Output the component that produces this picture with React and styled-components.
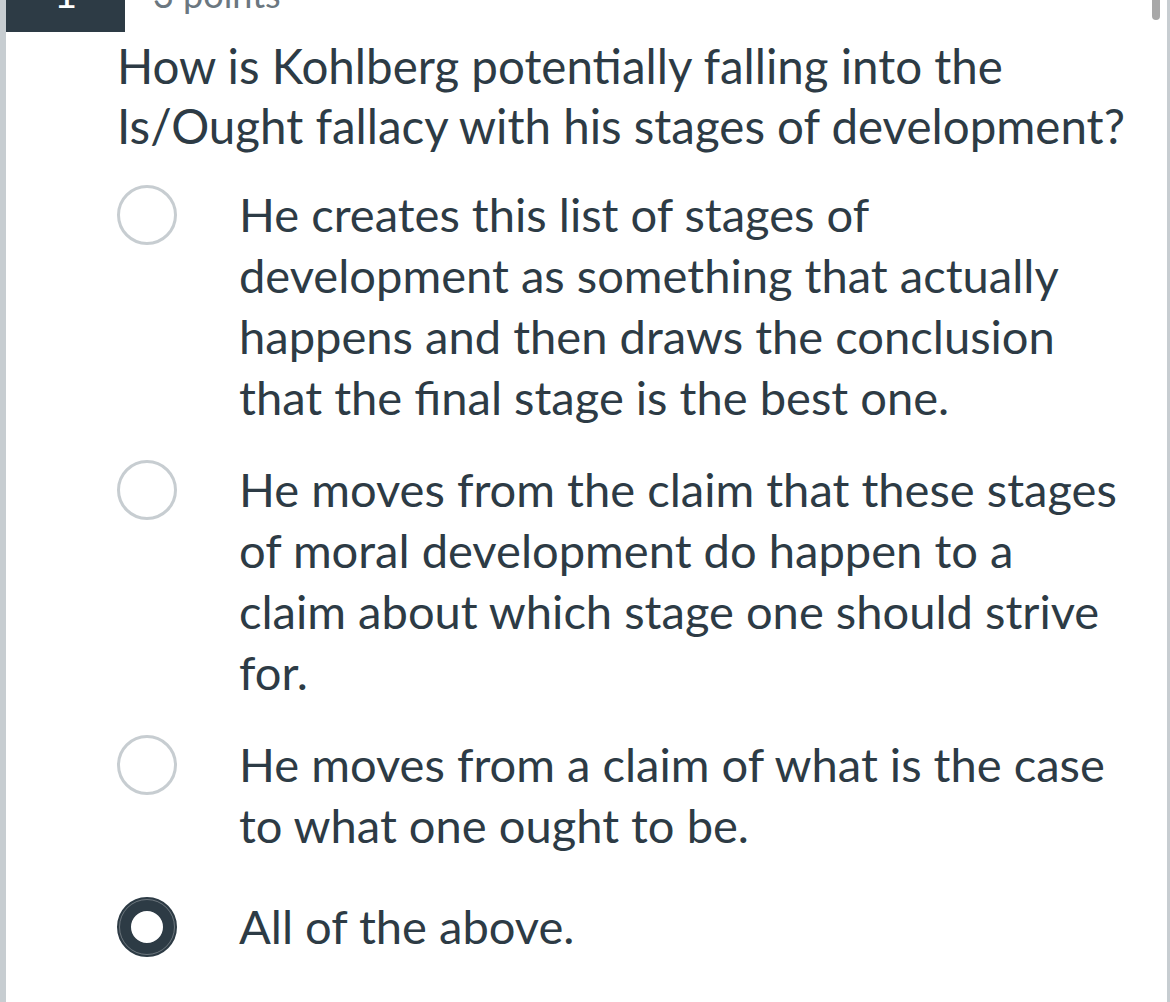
import React from "react";
import styled, { createGlobalStyle } from "styled-components";

const GlobalStyle = createGlobalStyle`
  html, body {
    margin: 0;
    padding: 0;
    background: #fff;
    overflow: hidden;
  }
  body {
    font-family: Lato, "Open Sans", "Liberation Sans", sans-serif;
    color: #2d3b45;
  }
`;

const Page = styled.div`
  box-sizing: border-box;
  min-height: calc(100vh + 30px);
  margin-top: -30px;
  border-left: 6px solid #c7cdd1;
  border-right: 3px solid #c7cdd1;
  padding: 0 37px 0 0;
`;

// header is scrolled mostly out of view
const Header = styled.div`
  display: flex;
  align-items: flex-start;
  height: 62px;
`;

const Tab = styled.div`
  width: 119px;
  height: 62px;
  background: #2d3b45;
  color: #fff;
  font-size: 40px;
  line-height: 40px;
  text-align: center;
  overflow: hidden;
  & span {
    display: block;
    margin-top: 3px;
  }
`;

const Points = styled.div`
  margin-left: 28px;
  margin-top: 6px;
  font-size: 36px;
  line-height: 36px;
  color: #6b7780;
`;

const Body = styled.div`
  padding-left: 111px;
`;

const Question = styled.h1`
  margin: 4px 0 0;
  font-size: 47.5px;
  font-weight: 400;
  line-height: 60px;
`;

const Options = styled.div`
  display: flex;
  flex-direction: column;
  gap: 31px;
  margin-top: 28px;
`;

const Option = styled.label`
  display: flex;
  align-items: flex-start;
  gap: 62px;
  margin-top: ${(p) => (p.$extra ? `${p.$extra}px` : "0")};
`;

const Radio = styled.span`
  box-sizing: border-box;
  flex: 0 0 60px;
  width: 60px;
  height: 60px;
  margin-top: 1px;
  border-radius: 50%;
  background: #fff;
  position: relative;
  border: ${(p) => (p.$checked ? "14.5px solid #2d3b45" : "3px solid #c7cdd1")};
  &::after {
    content: "";
    display: ${(p) => (p.$checked ? "block" : "none")};
    position: absolute;
    inset: -12px;
    border-radius: 50%;
    border: 1px solid rgba(255, 255, 255, 0.3);
  }
`;

const OptionText = styled.div`
  font-size: 47.1px;
  line-height: 61px;
`;

const Scrollbar = styled.div`
  position: fixed;
  top: -6px;
  right: 10px;
  width: 8px;
  height: 26px;
  border-radius: 4px;
  background: #a8a8a8;
`;

const answers = [
  "He creates this list of stages of development as something that actually happens and then draws the conclusion that the final stage is the best one.",
  "He moves from the claim that these stages of moral development do happen to a claim about which stage one should strive for.",
  "He moves from a claim of what is the case to what one ought to be.",
  "All of the above.",
];

const extraGap = [0, 0, 0, 9];

export default function App() {
  return (
    <>
      <GlobalStyle />
      <Page>
        <Header>
          <Tab>
            <span>1</span>
          </Tab>
          <Points>3 points</Points>
        </Header>
        <Body>
          <Question>
            How is Kohlberg potentially falling into the Is/Ought fallacy with
            his stages of development?
          </Question>
          <Options>
            {answers.map((a, i) => (
              <Option key={i} $extra={extraGap[i]}>
                <Radio $checked={i === 3} />
                <OptionText>{a}</OptionText>
              </Option>
            ))}
          </Options>
        </Body>
      </Page>
      <Scrollbar />
    </>
  );
}
